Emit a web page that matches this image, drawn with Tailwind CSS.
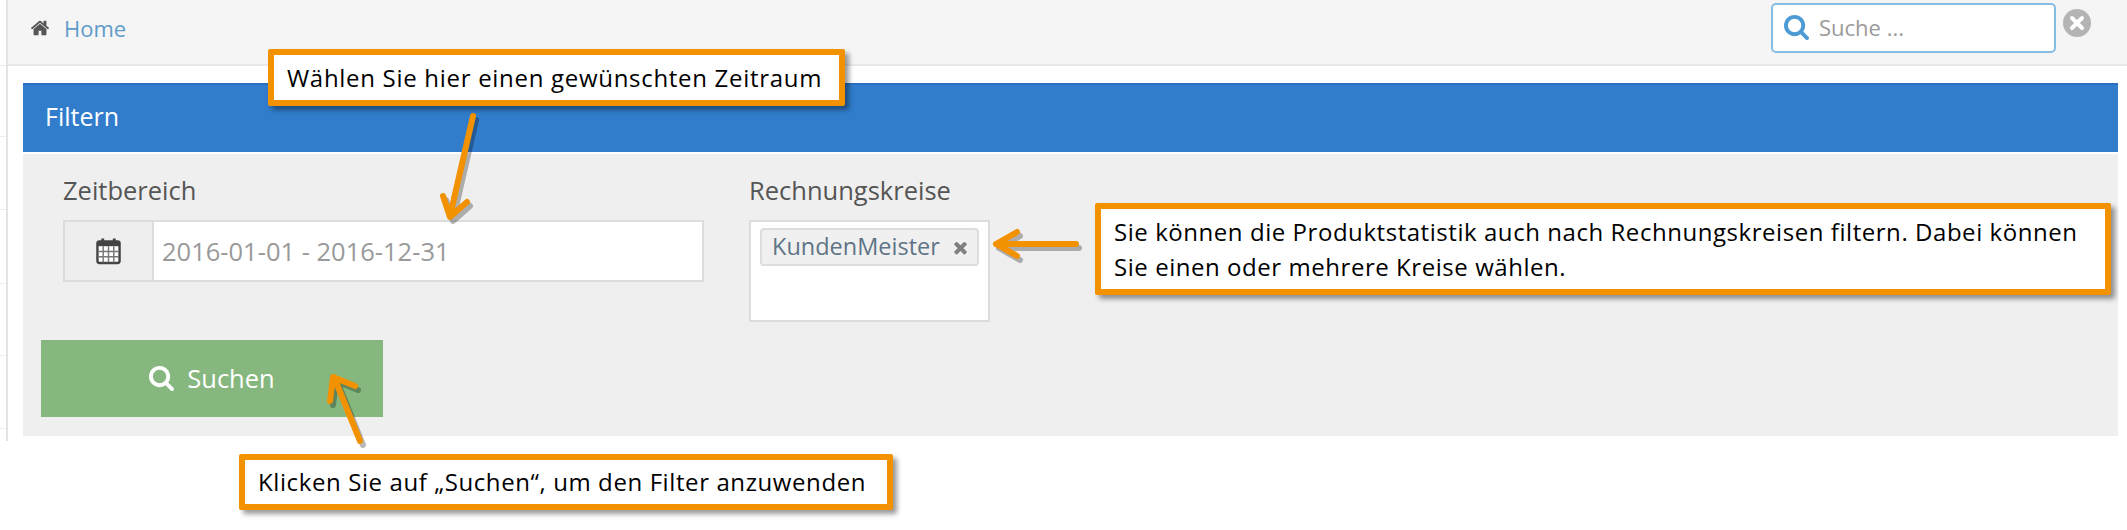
<!DOCTYPE html>
<html lang="de">
<head>
    <meta charset="UTF-8">
    <title>Filtern</title>
    <script src="https://cdn.jsdelivr.net/npm/@tailwindcss/browser@4"></script>
</head>
<body class="bg-white font-['Open_Sans',sans-serif]">
    <div class="relative h-[530px] w-[2127px] overflow-hidden">
        <div class="flex h-[441px] items-stretch">
            <!-- Sidebar stub -->
            <div class="flex w-[8px] shrink-0 flex-col border-r-2 border-[#e3e3e3]">
                <div class="h-[66px] shrink-0 border-b border-[#e8e8e8]"></div>
                <div class="h-[71px] shrink-0 border-b border-[#eeeeee]"></div>
                <div class="h-[73px] shrink-0 border-b border-[#eeeeee]"></div>
                <div class="h-[74px] shrink-0 border-b border-[#eeeeee]"></div>
                <div class="h-[72px] shrink-0 border-b border-[#eeeeee]"></div>
                <div class="h-[73px] shrink-0 border-b border-[#eeeeee]"></div>
            </div>

            <div class="min-w-0 flex-1">
                <!-- Top bar -->
                <div class="flex h-[66px] items-start justify-between border-b-2 border-[#e8e8e8] bg-[#f5f5f5] pl-[22px] pr-[36px]">
                    <div class="mt-[14px] flex items-center gap-[14px] text-[22px] leading-[28px] text-[#5f9bc9]">
                        <svg class="h-[20px] w-[20px] fill-[#555555]" viewBox="0 0 1792 1792"><path d="M1472 992v480q0 26-19 45t-45 19h-384v-384H768v384H384q-26 0-45-19t-19-45V992q0-1 .5-3t.5-3l575-474 575 474q1 2 1 6zm223-69l-62 74q-8 9-21 11h-3q-13 0-21-7L896 424l-692 577q-12 8-24 7-13-2-21-11l-62-74q-8-10-7-23.500t11-21.500l719-599q32-26 76-26t76 26l244 204V288q0-14 9-23t23-9h192q14 0 23 9t9 23v408l219 182q10 8 11 21.500t-7 23.500z"/></svg>
                        <span>Home</span>
                    </div>
                    <div class="flex items-start gap-[7px]">
                        <div class="mt-[3px] flex h-[50px] w-[285px] items-center gap-[10px] rounded-[5px] border-2 border-[#85bde6] bg-white pb-[2px] pl-[11px]">
                            <svg class="h-[25px] w-[25px] fill-[#4c9bd5]" viewBox="0 0 1664 1664"><path d="M1152 704q0-185-131.500-316.500T704 256 387.500 387.500 256 704t131.500 316.500T704 1152t316.500-131.500T1152 704zm512 832q0 52-38 90t-90 38q-54 0-90-38l-343-342q-179 124-399 124-143 0-273.500-55.500t-225-150-150-225T0 704t55.500-273.500 150-225 225-150T704 0t273.500 55.500 225 150 150 225T1408 704q0 220-124 399l343 343q37 37 37 90z"/></svg>
                            <span class="text-[22px] text-[#9a9a9a]">Suche ...</span>
                        </div>
                        <svg class="mt-[9px] h-[28px] w-[28px]" viewBox="0 0 28 28"><circle cx="14" cy="14" r="14" fill="#b4b4b4"/><path d="M9 9l10 10M19 9L9 19" stroke="#fff" stroke-width="4" stroke-linecap="round"/></svg>
                    </div>
                </div>

                <!-- Panel -->
                <div class="ml-[15px] mr-[9px] mt-[17px]">
                    <div class="flex h-[69px] items-center border-t-2 border-[#2a70c2] bg-[#317dcc] pb-[4px] pl-[22px] text-[25px] text-white">Filtern</div>
                    <div class="mt-[2px] h-[282px] bg-[#efefef] px-[18px] pt-[19px]">
                        <div class="flex items-start gap-[45px] pl-[22px]">
                            <div class="w-[641px]">
                                <div class="h-[47px] text-[25.5px] leading-[34px] text-[#555555]">Zeitbereich</div>
                                <div class="flex h-[62px] border-2 border-[#dcdcdc]">
                                    <div class="flex w-[89px] items-center justify-center border-r-2 border-[#dcdcdc] bg-[#eeeeee]">
                                        <svg class="h-[28px] w-[25px]" viewBox="0 0 26 28">
                                            <rect x="1.500" y="4" width="23" height="22.500" rx="2" fill="#fff" stroke="#444" stroke-width="2.500"/>
                                            <rect x="1" y="4" width="24" height="5" fill="#444"/>
                                            <path d="M7 1v6M19 1v6" stroke="#444" stroke-width="3"/>
                                            <path d="M7.500 9v17M13 9v17M18.500 9v17M2 14.500h22M2 20h22" stroke="#777" stroke-width="1.500"/>
                                        </svg>
                                    </div>
                                    <div class="flex flex-1 items-center bg-white pl-[8px] text-[25.5px] text-[#999999]">2016-01-01 - 2016-12-31</div>
                                </div>
                            </div>
                            <div class="w-[241px]">
                                <div class="h-[47px] text-[25.5px] leading-[34px] text-[#555555]">Rechnungskreise</div>
                                <div class="h-[102px] border-2 border-[#dcdcdc] bg-white px-[9px] pt-[6px]">
                                    <div class="flex h-[38px] items-center justify-between rounded-[4px] border-2 border-[#dddddd] bg-[#f0f0f0] pl-[10px] pr-[7px] text-[23.5px] text-[#5f7486]">
                                        <span>KundenMeister</span>
                                        <svg class="h-[19px] w-[19px] fill-[#808080]" viewBox="0 0 1792 1792"><path d="M1490 1322q0 40-28 68l-136 136q-28 28-68 28t-68-28l-294-294-294 294q-28 28-68 28t-68-28l-136-136q-28-28-28-68t28-68l294-294-294-294q-28-28-28-68t28-68l136-136q28-28 68-28t68 28l294 294 294-294q28-28 68-28t68 28l136 136q28 28 28 68t-28 68l-294 294 294 294q28 28 28 68z"/></svg>
                                    </div>
                                </div>
                            </div>
                        </div>
                        <div class="mt-[18px] flex h-[77px] w-[342px] items-center justify-center gap-[13px] bg-[#86b77f] text-[25.5px] text-white">
                            <svg class="h-[25px] w-[25px] fill-white" viewBox="0 0 1664 1664"><path d="M1152 704q0-185-131.500-316.500T704 256 387.500 387.500 256 704t131.500 316.500T704 1152t316.500-131.500T1152 704zm512 832q0 52-38 90t-90 38q-54 0-90-38l-343-342q-179 124-399 124-143 0-273.500-55.500t-225-150-150-225T0 704t55.500-273.500 150-225 225-150T704 0t273.500 55.500 225 150 150 225T1408 704q0 220-124 399l343 343q37 37 37 90z"/></svg>
                            <span>Suchen</span>
                        </div>
                    </div>
                </div>
            </div>
        </div>

        <!-- Annotation arrows -->
        <svg class="pointer-events-none absolute inset-0 h-[530px] w-[2127px]" viewBox="0 0 2127 530" fill="none">
            <g stroke="#000" stroke-opacity="0.28" stroke-width="6" stroke-linecap="round" stroke-linejoin="round" transform="translate(3 4)">
                <path d="M473 116L450 216M443 196l7 21 17-15"/>
                <path d="M1076 244H996M1017 232l-21 12 21 12"/>
                <path d="M360 441L334 377M330 401l3-24 22 9"/>
            </g>
            <g stroke="#f39200" stroke-width="6" stroke-linecap="round" stroke-linejoin="round">
                <path d="M473 116L450 216M443 196l7 21 17-15"/>
                <path d="M1076 244H996M1017 232l-21 12 21 12"/>
                <path d="M360 441L334 377M330 401l3-24 22 9"/>
            </g>
        </svg>

        <!-- Annotation callouts -->
        <div class="absolute left-[268px] top-[49px] flex h-[57px] w-[577px] items-center rounded-[2px] border-[6px] border-[#f39200] bg-white pl-[13px] text-[24px] tracking-[0.7px] text-black shadow-[4px_4px_5px_rgba(0,0,0,0.4)]">Wählen Sie hier einen gewünschten Zeitraum</div>
        <div class="absolute left-[1095px] top-[203px] h-[92px] w-[1016px] rounded-[2px] border-[6px] border-[#f39200] bg-white pl-[13px] pt-[5px] text-[24px] leading-[35px] tracking-[0.55px] text-black shadow-[4px_4px_5px_rgba(0,0,0,0.4)]">Sie können die Produktstatistik auch nach Rechnungskreisen filtern. Dabei können<br>Sie einen oder mehrere Kreise wählen.</div>
        <div class="absolute left-[239px] top-[454px] flex h-[56px] w-[654px] items-center rounded-[2px] border-[6px] border-[#f39200] bg-white pl-[13px] text-[24px] tracking-[0.6px] text-black shadow-[4px_4px_5px_rgba(0,0,0,0.4)]">Klicken Sie auf „Suchen“, um den Filter anzuwenden</div>
    </div>
</body>
</html>
